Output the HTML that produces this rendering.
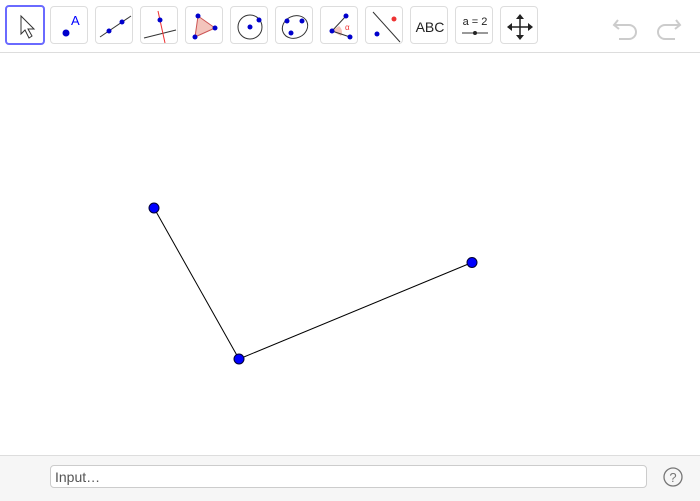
<!DOCTYPE html>
<html><head><style>
body{margin:0;width:700px;height:500px;overflow:hidden;background:#fff;font-family:"Liberation Sans",sans-serif;position:relative}
.tb{position:absolute;left:0;top:0;width:700px;height:52px;border-bottom:1px solid #ddd;background:#fff}
.b{position:absolute;top:6px;width:38px;height:38px;border:1px solid #ddd;border-radius:4px;background:#fff;box-sizing:border-box}
.b svg{position:absolute;left:0;top:0}
.sel{border:2px solid #6a6aff}
.bot{position:absolute;left:0;top:455px;width:700px;height:45px;background:#f6f6f6;border-top:1px solid #ddd}
.inp{position:absolute;left:50px;top:465px;width:597px;height:23px;border:1px solid #ccc;border-radius:4px;background:#fff;box-sizing:border-box;font-size:14px;color:#555;padding:2px 4px;line-height:18px}
</style></head><body>
<div class="tb">
<div class="b sel" style="left:5px;width:40px;height:40px;top:5px"><svg width="38" height="38"><path d="M14 9 L14 27 L18 23 L22 31 L25 29 L21 22 L27 22 Z" fill="#fff" stroke="#333" stroke-width="1"/></svg></div>
<div class="b" style="left:50px"><svg width="38" height="38"><circle cx="15" cy="26" r="3.5" fill="#00c"/><text x="20" y="18" font-size="13" fill="#00f" font-family="Liberation Sans">A</text></svg></div>
<div class="b" style="left:95px"><svg width="38" height="38"><line x1="4" y1="30" x2="35" y2="9" stroke="#333"/><circle cx="13" cy="24" r="2.5" fill="#00c"/><circle cx="26" cy="15" r="2.5" fill="#00c"/></svg></div>
<div class="b" style="left:140px"><svg width="38" height="38"><line x1="3" y1="31" x2="35" y2="23" stroke="#333"/><line x1="17" y1="4" x2="24" y2="36" stroke="#e33"/><circle cx="19" cy="13" r="2.5" fill="#00c"/></svg></div>
<div class="b" style="left:185px"><svg width="38" height="38"><polygon points="12,9 29,21 9,30" fill="#f3c4bc" stroke="#c55"/><circle cx="12" cy="9" r="2.5" fill="#00c"/><circle cx="29" cy="21" r="2.5" fill="#00c"/><circle cx="9" cy="30" r="2.5" fill="#00c"/></svg></div>
<div class="b" style="left:230px"><svg width="38" height="38"><circle cx="19" cy="20" r="12" fill="none" stroke="#333"/><circle cx="19" cy="20" r="2.5" fill="#00c"/><circle cx="28" cy="13" r="2.5" fill="#00c"/></svg></div>
<div class="b" style="left:275px"><svg width="38" height="38"><ellipse cx="19" cy="20" rx="13" ry="11" transform="rotate(-25 19 20)" fill="none" stroke="#333"/><circle cx="11" cy="14" r="2.5" fill="#00c"/><circle cx="26" cy="14" r="2.5" fill="#00c"/><circle cx="15" cy="26" r="2.5" fill="#00c"/></svg></div>
<div class="b" style="left:320px"><svg width="38" height="38"><path d="M11 24 L18 19 A8 8 0 0 1 20 29 Z" fill="#f3c4bc"/><line x1="11" y1="24" x2="25" y2="9" stroke="#333"/><line x1="11" y1="24" x2="29" y2="30" stroke="#333"/><circle cx="11" cy="24" r="2.5" fill="#00c"/><circle cx="25" cy="9" r="2.5" fill="#00c"/><circle cx="29" cy="30" r="2.5" fill="#00c"/><text x="24" y="23" font-size="8" fill="#e33">α</text></svg></div>
<div class="b" style="left:365px"><svg width="38" height="38"><line x1="7" y1="5" x2="34" y2="35" stroke="#333"/><circle cx="28" cy="12" r="2.5" fill="#e33"/><circle cx="11" cy="27" r="2.5" fill="#00c"/></svg></div>
<div class="b" style="left:410px"><svg width="38" height="38"><text x="19" y="25" text-anchor="middle" font-size="14" fill="#222" font-family="Liberation Sans">ABC</text></svg></div>
<div class="b" style="left:455px"><svg width="38" height="38"><text x="19" y="18" text-anchor="middle" font-size="11" fill="#222" font-family="Liberation Sans">a = 2</text><line x1="6" y1="26" x2="32" y2="26" stroke="#333"/><circle cx="19" cy="26" r="2" fill="#222"/></svg></div>
<div class="b" style="left:500px"><svg width="38" height="38"><path d="M19 10 V30 M9 20 H29" stroke="#222" stroke-width="1.5"/><path d="M19 7 L15 12 H23 Z M19 33 L15 28 H23 Z M6 20 L11 16 V24 Z M32 20 L27 16 V24 Z" fill="#222"/></svg></div>
<svg style="position:absolute;left:610px;top:10px" width="75" height="32"><path d="M8 10 L4 15 L9 19 M4 15 H19 A7 7 0 0 1 19 29 H9" fill="none" stroke="#ccc" stroke-width="2"/><path d="M66 10 L70 15 L65 19 M70 15 H55 A7 7 0 0 0 55 29 H65" fill="none" stroke="#ccc" stroke-width="2"/></svg>
</div>
<svg style="position:absolute;left:0;top:53px" width="700" height="402">
<line x1="154" y1="155" x2="239" y2="306" stroke="#000"/>
<line x1="239" y1="306" x2="472" y2="209.5" stroke="#000"/>
<circle cx="154" cy="155" r="5" fill="#00f" stroke="#003" stroke-width="1"/>
<circle cx="239" cy="306" r="5" fill="#00f" stroke="#003" stroke-width="1"/>
<circle cx="472" cy="209.5" r="5" fill="#00f" stroke="#003" stroke-width="1"/>
</svg>
<div class="bot"></div>
<div class="inp">Input…</div>
<svg style="position:absolute;left:662px;top:466px" width="22" height="22"><circle cx="11" cy="11" r="9" fill="none" stroke="#777" stroke-width="1.3"/><text x="11" y="16" text-anchor="middle" font-size="13" fill="#777" font-family="Liberation Sans">?</text></svg>
</body></html>
